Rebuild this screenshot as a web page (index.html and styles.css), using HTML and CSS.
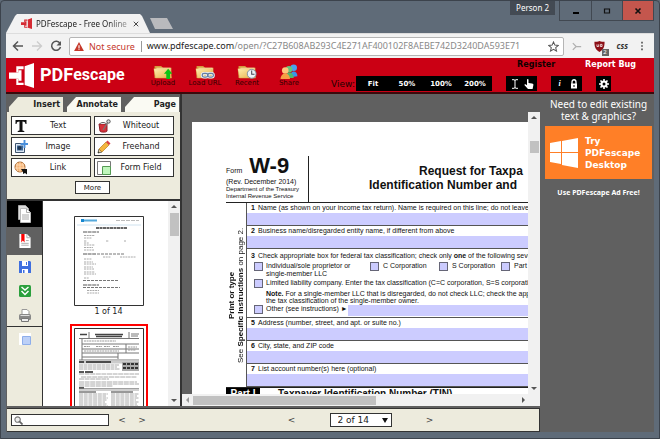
FILE: index.html
```html
<!DOCTYPE html>
<html lang="en">
<head>
<meta charset="utf-8">
<title>PDFescape - Free Online</title>
<link rel="stylesheet" href="styles.css">
</head>
<body>
<svg class="defs" aria-hidden="true">
  <defs>
    <linearGradient id="gold" x1="0" y1="0" x2="1" y2="1"><stop offset="0" stop-color="#fff0b0"/><stop offset="1" stop-color="#e5ab45"/></linearGradient>
    <symbol id="door" viewBox="0 0 24 24"><path d="M7 3h7v3H9v3H7zM7 15h2v4h5v2H7z"/><path d="M15 3l9-3v24l-9-3zM0 9h9V7h3v10H9v-2H0z"/></symbol>
    <symbol id="folder" viewBox="0 0 20 16"><path d="M1 2h7l2 2h9v11H1z" fill="#d39b3d"/><path d="M3 4h15v11H2z" fill="#fff3c4"/><path d="M0 5h17l2 10H2z" fill="url(#gold)" stroke="#dba544" stroke-width=".5"/></symbol>
  </defs>
</svg>
<div class="window">
  <div class="titlebar">
    <div class="tab">
      <svg class="favicon" fill="#d52b33"><use href="#door"/></svg>
      <span class="tab-title">PDFescape - Free Online</span>
      <button class="tab-close" aria-label="Close tab"><svg viewBox="0 0 8 8" width="6" height="6"><path d="M1 1l6 6M7 1L1 7" stroke="#444" stroke-width="1.3"/></svg></button>
    </div>
    <button class="newtab" aria-label="New tab"></button>
    <span class="person">Person 2</span>
    <div class="winbtns">
      <button aria-label="Minimize"><svg viewBox="0 0 8 8" width="8" height="8"><path d="M1 5h6v2H1z"/></svg></button>
      <button aria-label="Maximize"><svg viewBox="0 0 8 8" width="8" height="8"><path d="M1.5 2h5v4h-5z" fill="none" stroke="#111" stroke-width="1.2"/></svg></button>
      <button class="close" aria-label="Close"><svg viewBox="0 0 8 8" width="8" height="8"><path d="M1.5 1.500l5 5M6.500 1.500l-5 5" stroke="#111" stroke-width="1.600"/></svg></button>
    </div>
  </div>

  <div class="addressbar">
    <button aria-label="Back"><svg viewBox="0 0 12 12" width="12" height="12"><path d="M11 6H2M6 1.500L1.500 6 6 10.500" fill="none" stroke="#555" stroke-width="1.500"/></svg></button>
    <button aria-label="Forward"><svg viewBox="0 0 12 12" width="12" height="12"><path d="M1 6h9M6 1.500L10.500 6 6 10.500" fill="none" stroke="#ccc" stroke-width="1.400"/></svg></button>
    <button aria-label="Reload"><svg viewBox="0 0 12 12" width="12" height="12"><path d="M10 3.500A4.500 4.500 0 1 0 10.500 7" fill="none" stroke="#555" stroke-width="1.500"/><path d="M11 1v4.500H6.500z" fill="#555"/></svg></button>
    <div class="omnibox">
      <svg viewBox="0 0 12 11" width="10" height="9"><path d="M6 0l6 11H0z" fill="#c5392b"/><path d="M5.300 4h1.400v3.500H5.300zM5.300 8.300h1.400v1.300H5.300z" fill="#fff"/></svg>
      <span class="notsecure">Not secure</span>
      <span class="url">www.pdfescape.com<span>/open/?C27B608AB293C4E271AF400102F8AEBE742D3240DA593E71</span></span>
      <svg viewBox="0 0 12 12" width="11" height="11"><path d="M6 1l1.500 3.500 3.800.3-2.900 2.500.9 3.700L6 9l-3.300 2 .9-3.700L.7 4.800l3.800-.3z" fill="none" stroke="#555" stroke-width="1.100"/></svg>
    </div>
    <div class="extensions">
      <svg viewBox="0 0 12 10" width="10" height="9"><path d="M1 1l4 4-4 4M4 5h7" fill="none" stroke="#b0b0b0" stroke-width="1.500"/></svg>
      <span class="shield"><svg viewBox="0 0 12 13" width="11" height="11"><path d="M6 0c2 1 4 1 6 1 0 6-1 9-6 12C1 10 0 7 0 1c2 0 4 0 6-1z" fill="#8c1017"/><path d="M3 4v2.500h2V4M7 4h2v2.500H7z" fill="none" stroke="#fff" stroke-width=".9"/></svg><i>2</i></span>
      <b>css</b>
      <svg viewBox="0 0 4 12" width="4" height="10"><path d="M1 1h2v2H1zM1 5h2v2H1zM1 9h2v2H1z" fill="#555"/></svg>
    </div>
  </div>

  <header class="app-header">
    <a class="logo" href="#"><svg fill="#fff"><use href="#door"/></svg><span class="pdf">PDF</span><span>escape</span></a>
    <nav class="tools">
      <button><svg viewBox="0 0 20 16"><use href="#folder"/><path d="M15.500 5l4.500 5.500h-2.500V16h-4v-5.500H11z" fill="#0ac414"/></svg>Upload</button>
      <button><svg viewBox="0 0 20 16"><use href="#folder"/><g fill="none" stroke="#e5edf8" stroke-width="3"><rect x="7" y="10" width="6" height="4" rx="2"/><rect x="13" y="10" width="6" height="4" rx="2"/></g><g fill="none" stroke="#67809f" stroke-width="1.300"><rect x="7" y="10" width="6" height="4" rx="2"/><rect x="13" y="10" width="6" height="4" rx="2"/></g></svg>Load URL</button>
      <button><svg viewBox="0 0 20 16"><use href="#folder"/><circle cx="15" cy="10.500" r="4.700" fill="#eef3f8" stroke="#7c8fa3"/><path d="M15 7v4h3" fill="none" stroke="#445" stroke-width="1.100"/></svg>Recent</button>
      <button><svg viewBox="0 0 20 16"><circle cx="15" cy="4" r="3.500" fill="#49a2ef"/><path d="M11 14c0-8 8-8 8-1z" fill="#3b95e9"/><circle cx="10" cy="5.500" r="3.500" fill="#64c47b"/><path d="M6 15c0-8 9-8 9 0z" fill="#51b96b"/><circle cx="6" cy="7" r="3.500" fill="#ffc67b"/><path d="M1 16c0-8 10-8 10 0z" fill="#f6a044"/></svg>Share</button>
    </nav>
    <div class="controls">
      <div class="links"><a href="#">Register</a><a class="bug" href="#">Report Bug</a></div>
      <div class="bars">
        <span class="view">View:</span>
        <div class="bar zoom"><button>Fit</button><button>50%</button><button>100%</button><button>200%</button></div>
        <div class="bar">
          <button aria-label="Select text"><svg viewBox="0 0 8 10" width="8" height="10"><path d="M1 .7h2l1 .6 1-.6h2M4 1v8M1 9.300h2l1-.6 1 .6h2" fill="none" stroke="#fff"/></svg></button>
          <button aria-label="Pan"><svg viewBox="0 0 10 10" width="10" height="10"><path d="M3 .8c0-1 1.500-1 1.500 0V4L8 4.500c1.500.2 1.500.8 1.300 2L8.600 10H4L.6 6.300c-.6-.8.2-1.500 1-1L3 6.300z" fill="#fff"/></svg></button>
        </div>
        <div class="bar">
          <button class="info">i</button>
          <button aria-label="Protect"><svg viewBox="0 0 8 10" width="8" height="10"><path d="M2 5V3c0-3 4-3 4 0v2" fill="none" stroke="#fff" stroke-width="1.300"/><path d="M1 4.500h6V9.500H1z" fill="#fff"/><path d="M3.500 6h1v2h-1z"/></svg></button>
        </div>
        <div class="bar gear">
          <button aria-label="Settings"><svg viewBox="0 0 12 12" width="10" height="10"><circle cx="6" cy="6" r="3" fill="none" stroke="#fff" stroke-width="2.400"/><path d="M6 0v3M6 9v3M0 6h3M9 6h3M1.800 1.800l2 2M8.200 8.200l2 2M10.200 1.800l-2 2M3.800 8.200l-2 2" stroke="#fff" stroke-width="1.900"/></svg></button>
        </div>
      </div>
    </div>
  </header>

  <main class="workspace">
    <div class="editor">
      <aside class="side">
        <div class="tabs"><button class="on">Insert</button><button>Annotate</button><button>Page</button></div>
        <div class="insert">
          <div class="insert-grid">
            <button><svg viewBox="0 0 14 14"><path d="M1.500 1h11v4h-1c-.3-2-1-2.600-3-2.600V11.500l1.800.5v1H3.700v-1l1.800-.5V2.400c-2 0-2.700.6-3 2.600h-1z" fill="#111"/></svg><span>Text</span></button>
            <button><svg viewBox="0 0 14 14"><path d="M2 5h8v7c0 1.500-7 1.500-7 0z" fill="#d7313a" stroke="#8d2028"/><path d="M3 5c0-2 6-2 6 0" fill="#eee" stroke="#666"/><path d="M6 11l5-8" stroke="#777" stroke-width="1.300"/><circle cx="11.500" cy="2.500" r="1.700" fill="#ddd" stroke="#555"/></svg><span>Whiteout</span></button>
            <button><svg viewBox="0 0 14 14"><path d="M1.500 3.500h9v9h-9z" fill="#dce7f3" stroke="#3d536c"/><path d="M3 5.500h6v5H3z" fill="#416b9a"/><circle cx="5.500" cy="8" r="2" fill="#1e3550"/><path d="M10.500 0v8M6.500 4h8" stroke="#4a8fdb" stroke-width="1.900"/></svg><span>Image</span></button>
            <button><svg viewBox="0 0 14 14"><path d="M1 13l1-4 3 3z" fill="#e9cfa0" stroke="#665"/><path d="M2 9l7-7 3 3-7 7z" fill="#f4b63f" stroke="#b97f20" stroke-width=".7"/><path d="M9 2l1.500-1.500 3 3L12 5z" fill="#dc3f45"/><path d="M1 13l.4-1.500 1 1z" fill="#222"/></svg><span>Freehand</span></button>
            <button><svg viewBox="0 0 14 14"><circle cx="6" cy="6" r="5" fill="#f7b273" stroke="#ad6b32"/><path d="M2 4h8M1 7h10M6 1v10M3.500 2c-1 3-1 5 0 8M8.500 2c1 3 1 5 0 8" stroke="#ffdfbd" stroke-width=".8" fill="none"/><path d="M7 8h6v5.500l-2-1.500-2 1 0-2z" fill="#111"/></svg><span>Link</span></button>
            <button><svg viewBox="0 0 14 14"><path d="M.5.5h13v13H.5z" fill="#fff" stroke="#777"/><path d="M5.500 5.500h8v8h-8z" fill="#bff6bb" stroke="#559a54"/></svg><span>Form Field</span></button>
          </div>
          <button class="more">More</button>
        </div>
        <div class="browse">
          <div class="rail">
            <button class="pages" aria-label="Pages"><svg viewBox="0 0 13 18" width="13" height="18"><path d="M.5.500h7l3 3v11H.5z" fill="#ddd" stroke="#aaa"/><path d="M2.500 3.500h6l4 4v10h-10z" fill="#fff" stroke="#bbb"/><path d="M8.500 3.500v4h4M4 10h7M4 12h7M4 14h7" fill="none" stroke="#aaa"/></svg></button>
            <button class="marks" aria-label="Bookmarks"><svg viewBox="0 0 12 15" width="12" height="14"><path d="M0 0h8l4 4v11H0z" fill="#fff"/><path d="M8 0v4h4M2 10h8M2 12h8M7 7h3" fill="none" stroke="#aaa"/><path d="M2 0h3.500v9L3.700 7 2 9z" fill="#f00"/></svg></button>
            <div class="actions">
              <button aria-label="Save"><svg viewBox="0 0 12 12" width="12" height="12"><path d="M0 0h11l1 1v11H0z" fill="#3f6fdf"/><path d="M3 0h6v5H3zM3 8h6v4H3z" fill="#fff"/><path d="M7 1h1v3H7zM4 9h1.500v3H4z" fill="#3f6fdf"/></svg></button>
              <button aria-label="Download"><svg viewBox="0 0 12 12" width="12" height="12"><rect width="12" height="12" rx="1.500" fill="#2ba03d"/><path d="M2.500 2L6 5l3.500-3M2.500 6L6 9.500 9.500 6" fill="none" stroke="#fff" stroke-width="1.500"/></svg></button>
              <button aria-label="Print"><svg viewBox="0 0 12 13" width="12" height="13"><path d="M3 .500h5l2 2v4H3z" fill="#fff" stroke="#999"/><rect y="5" width="12" height="6" rx="1.500" fill="#888"/><path d="M1.500 6.500h9" stroke="#ddd"/><path d="M2.500 9.500h7v3h-7z" fill="#eee" stroke="#777"/></svg></button>
            </div>
            <div class="shade"><button aria-label="Highlight fields"><svg viewBox="0 0 12 12" width="12" height="12"><path d="M0 0h12v12H0z" fill="#fff"/><path d="M3.500 3.500h8v8h-8z" fill="#bcd0f7" stroke="#8eaeea"/></svg></button></div>
          </div>
          <div class="thumbs">
            <figure>
              <svg viewBox="0 0 70 90" width="70" height="90">
                <path d="M.5.500h69v89H.5z" fill="#fff" stroke="#333"/>
                <path d="M7 3h3v3H7z" fill="#1787cf"/><path d="M10 4.500h13" stroke="#55a9dc" stroke-width="2"/><path d="M42 4.500h23" stroke="#bbb" stroke-dasharray="4 1"/><path d="M3 9h64" stroke="#cfe2ef"/>
                <path d="M22 12h31" stroke="#333" stroke-width="1.500" stroke-dasharray="3 .5"/>
                <path d="M9 16h16M9 38h13M9 69h16" stroke="#555" stroke-dasharray="4 .6"/>
                <path d="M23 38h28M9 64.500h36M9 71.500h37" stroke="#777" stroke-dasharray="3 1"/>
                <path d="M10 19.500h11M10 22h8M10 25h3M32 25h3M50 25h2M10 27h5M10 29h11M10 31.500h9M10 34h10M29 41h8M46 41h16M10 43h8M10 46h9M10 48h12M10 51h9M10 53h10M10 56h11M10 58h12M10 62h5M13 74.500h12M13 77h12" stroke="#aaa" stroke-dasharray="2 .7"/>
              </svg>
              <figcaption>1 of 14</figcaption>
            </figure>
            <figure class="current">
              <svg viewBox="0 0 70 90" width="70" height="90">
                <path d="M.5.500h69v89H.5z" fill="#fff" stroke="#333"/>
                <path d="M6 6.500h7M21 6.500h28M22 8.500h26" stroke="#444" stroke-width="1.500"/><path d="M15 4v6M55 4v6M57 6h8M57 8h7M5 10.500h60M8 10v22M8 16h57M8 21h57M44 25v6M8 25h57M8 29h36M5 32h60M52 16v9" fill="none" stroke="#777"/>
                <path d="M10 13h32M10 18.500h6M22 18.500h6M30 18.500h6M39 18.500h6M10 23h35M54 19h9M54 22h8" stroke="#999" stroke-dasharray="2 .6"/>
                <path d="M5 32.500h60v3H5z" fill="#ccc"/><path d="M5 34h5M12 34h25M5 44h5M11 44h8M5 60h5" stroke="#222" stroke-width="1.600"/>
                <path d="M5 37h40M5 39h38M5 41h41" stroke="#aaa" stroke-dasharray="4 .5"/>
                <path d="M48 34h17v9H48z" fill="#aaa"/><path d="M49 36h16M49 40h16" stroke="#333" stroke-width="2" stroke-dasharray="3 1"/>
                <path d="M5 46h60M7 49h56M5 51h30M5 54h58M5 56h60M5 58h34" stroke="#aaa" stroke-dasharray="5 .6"/><path d="M5 60.500h60M5 62h60" stroke="#777" stroke-width=".7"/>
                <path d="M5 64h17M37 64h22" stroke="#333"/><path d="M5 66h29M5 68h27M5 70h29M5 72h28M5 74h26M5 76h28M5 78h29M5 80h22M37 66h28M37 68h26M37 70h28M37 72h25M37 74h28M37 76h26M37 78h27" stroke="#aaa" stroke-dasharray="4 .7"/>
              </svg>
            </figure>
          </div>
          <div class="vscroll side-scroll"><i class="up"></i><i class="thumb"></i><i class="down"></i></div>
        </div>
      </aside>

      <section class="viewer">
        <div class="canvas">
          <article class="page">
            <div class="form-head">
              <div class="form-id">
                <p class="form-name">Form <strong>W-9</strong></p>
                <p>(Rev. December 2014)</p>
                <p class="dept">Department of the Treasury</p>
                <p class="dept">Internal Revenue Service</p>
              </div>
              <h1><span>Request for Taxpa</span>Identification Number and</h1>
            </div>
            <div class="form-body">
              <div class="vertical"><b>Print or type</b><span>See <b>Specific Instructions</b> on page 2.</span></div>
              <div class="lines">
                <div class="line"><label for="f1"><b>1</b>Name (as shown on your income tax return). Name is required on this line; do not leave thi</label><input id="f1"></div>
                <div class="line"><label for="f2"><b>2</b>Business name/disregarded entity name, if different from above</label><input id="f2"></div>
                <div class="classes">
                  <p class="ask"><b>3</b>Check appropriate box for federal tax classification; check only <strong>one</strong> of the following seven</p>
                  <div class="row">
                    <label class="indiv"><input type="checkbox"><span>Individual/sole proprietor or<br>single-member LLC</span></label>
                    <label class="corp"><input type="checkbox"><span>C Corporation</span></label>
                    <label class="scorp"><input type="checkbox"><span>S Corporation</span></label>
                    <label><input type="checkbox"><span>Part</span></label>
                  </div>
                  <label class="llc"><input type="checkbox"><span>Limited liability company. Enter the tax classification (C=C corporation, S=S corporation</span></label>
                  <p class="note"><strong>Note.</strong> For a single-member LLC that is disregarded, do not check LLC; check the appro<br>the tax classification of the single-member owner.</p>
                  <div class="other"><label><input type="checkbox"><span>Other (see instructions) ►</span></label><input aria-label="Other classification"></div>
                </div>
                <div class="line"><label for="f5"><b>5</b>Address (number, street, and apt. or suite no.)</label><input id="f5"></div>
                <div class="line"><label for="f6"><b>6</b>City, state, and ZIP code</label><input id="f6"></div>
                <div class="line"><label for="f7"><b>7</b>List account number(s) here (optional)</label><input id="f7"></div>
              </div>
            </div>
            <h2><span>Part I</span>Taxpayer Identification Number (TIN)</h2>
          </article>
          <div class="vscroll page-scroll"><i class="up"></i><i class="thumb"></i><i class="down"></i></div>
        </div>
        <div class="hscroll"><i class="left"></i><i class="thumb"></i><i class="right"></i></div>
      </section>

      <footer class="pager">
        <div class="find">
          <label class="search"><svg viewBox="0 0 10 10" width="9" height="9"><circle cx="4" cy="4" r="3" fill="#eee" stroke="#777" stroke-width="1.200"/><path d="M6 6l3.500 3.500" stroke="#666" stroke-width="1.800"/></svg><input aria-label="Find in document"></label>
          <button>&lt;</button><button>&gt;</button>
        </div>
        <div class="goto">
          <button>&lt;</button>
          <div class="pick"><select aria-label="Page"><option>2 of 14</option></select></div>
          <button>&gt;</button>
        </div>
      </footer>
    </div>

    <aside class="promo">
      <p>Need to edit existing text &amp; graphics?</p>
      <a class="try" href="#"><svg viewBox="0 0 28 30" width="28" height="30"><path d="M0 5l11-2v11H0zM12 3l16-3v14H12zM0 15h11v11L0 24zM12 15h16v15l-16-3z" fill="#fff"/></svg><span>Try PDFescape Desktop</span></a>
      <small>Use PDFescape Ad Free!</small>
    </aside>
  </main>
</div>
</body>
</html>
```

FILE: styles.css
```css
* { box-sizing: border-box; }
body { margin: 0; font: 9px/12px "DejaVu Sans", Verdana, sans-serif; color: #222; background: #5f6b78; }
button, input, select { margin: 0; padding: 0; border: 0; background: none; font: inherit; color: inherit; border-radius: 0; }
button { display: flex; align-items: center; justify-content: center; }
a { text-decoration: none; color: inherit; }
p, h1, h2, figure { margin: 0; }
svg { flex: none; display: block; }
.defs { position: absolute; width: 0; height: 0; }

.window { display: flex; flex-direction: column; height: 100vh; min-height: 400px; overflow: hidden; padding: 0 5px 6px; border: 1px solid #3c434c; border-radius: 4px 4px 0 0; }

/* Browser chrome */
.titlebar { display: flex; align-items: flex-end; height: 32px; flex: none; font: 8px/12px "Noto Sans", sans-serif; }
.tab { display: flex; align-items: center; gap: 4px; width: 144px; height: 19px; padding: 0 11px 0 15px; background: #f2f2f2; clip-path: polygon(0 100%, 9px 2px, 11px 0, 134px 0, 136px 2px, 100% 100%); }
.favicon { width: 11px; height: 11px; }
.tab-title { flex: 1; white-space: nowrap; overflow: hidden; -webkit-mask-image: linear-gradient(90deg, #000 75%, #0005); mask-image: linear-gradient(90deg, #000 75%, #0005); }
.newtab { width: 23px; height: 11px; margin-bottom: 4px; background: #b9babd; clip-path: polygon(0 0, 17px 0, 100% 100%, 5px 100%); }
.person { align-self: flex-start; margin-left: auto; padding: 0 6px; line-height: 14px; background: #434a53; color: #fff; }
.winbtns { align-self: flex-start; display: flex; margin-left: 4px; border: 1px solid #414851; border-top: 0; }
.winbtns button { width: 31px; height: 19px; }
.winbtns button + button { border-left: 1px solid #414851; }
.winbtns .close { background: #c4564d; }
.addressbar { display: flex; align-items: center; gap: 7px; height: 25px; flex: none; padding: 0 10px 0 6px; background: #f2f2f2; border-top: 1px solid #ddd; }
.omnibox { flex: 1; min-width: 0; display: flex; align-items: center; gap: 5px; height: 19px; padding: 0 4px; background: #fff; border: 1px solid #b5b5b5; border-radius: 2px; font: 9px/14px "Noto Sans", sans-serif; white-space: nowrap; }
.notsecure { color: #c5392b; padding-right: 6px; border-right: 1px solid #999; line-height: 11px; }
.url { flex: 1; }
.url span { color: #888; }
.extensions { display: flex; align-items: center; gap: 12px; margin-left: 1px; }
.extensions b { font: italic bold 8px/10px "Noto Sans", sans-serif; color: #333; }
.shield { position: relative; }
.shield i { position: absolute; right: -4px; bottom: -4px; width: 7px; background: #666; color: #fff; font: 6px/7px "Noto Sans", sans-serif; text-align: center; }

/* Application header */
.app-header { display: flex; height: 36px; flex: none; background: #cb0014; border-bottom: 2px solid #3a0a0c; }
.logo { display: flex; align-items: center; width: 136px; padding-left: 3px; color: #fff; font: bold 16px/30px Roboto, sans-serif; }
.logo svg { width: 25px; height: 25px; margin-right: 6px; }
.logo .pdf { font-size: 18px; }
.tools { display: flex; }
.tools button { flex-direction: column; justify-content: flex-start; width: 42px; padding-top: 6px; font-size: 7px; line-height: 9px; color: #300; white-space: nowrap; }
.tools svg { width: 20px; height: 15px; }
.controls { flex: 1; display: flex; flex-direction: column; justify-content: space-between; }
.links { display: flex; justify-content: flex-end; gap: 30px; padding-right: 18px; font: bold 8px/14px "DejaVu Sans", Verdana, sans-serif; color: #100; }
.links .bug { color: #fff; }
.bars { display: flex; justify-content: flex-end; gap: 14px; padding-right: 43px; }
.view { margin-right: -13px; line-height: 16px; color: #200; }
.bar { display: flex; height: 15px; padding: 0 2px; background: #000; }
.bar button { width: 13px; color: #fff; font: bold 7px/14px "DejaVu Sans", Verdana, sans-serif; }
.bar .info { font: italic bold 8px/12px "Liberation Serif", serif; }
.bar button + button { margin-left: 1px; }
.zoom { padding: 0; }
.zoom button, .zoom button + button { width: 34px; margin: 0; }
.gear { padding: 0 1px; }

/* Workspace */
.workspace { flex: 1; min-height: 0; display: grid; grid-template-columns: minmax(0, 1fr) 114px; background: #606060; }
.editor { display: grid; grid-template: minmax(0, 1fr) 24px / 175px minmax(0, 1fr); row-gap: 2px; min-height: 0; padding-left: 1px; }
.side { display: flex; flex-direction: column; min-height: 0; padding-top: 3px; border-right: 2px solid #333; }
.tabs { display: flex; gap: 4px; padding-left: 2px; font-weight: bold; }
.tabs button { flex: none; width: 54px; height: 15px; justify-content: flex-end; padding-right: 3px; background: #fafaf3; font: bold 8px/14px "DejaVu Sans", Verdana, sans-serif; clip-path: polygon(0 100%, 0 10px, 9px 0, 100% 0, 100% 100%); }
.tabs .on { background: #edebdd; }
.insert { padding: 4px 6px 5px 4px; background: #edebdd; border-bottom: 2px solid #333; }
.insert-grid { display: grid; grid-template-columns: 1fr 1fr; gap: 2px 3px; }
.insert button { background: #fff; border: 1px solid #333; }
.insert-grid button { height: 19px; padding: 0 2px; font-size: 8px; }
.insert-grid svg { width: 14px; height: 14px; }
.insert-grid span { flex: 1; white-space: nowrap; }
.insert .more { width: 35px; height: 13px; margin: 4px auto 0; font-size: 7px; }
.browse { flex: 1; min-height: 0; display: flex; background: #fff; }
.rail { width: 36px; display: flex; flex-direction: column; background: #606060; border-right: 1px solid #333; }
.rail button { width: 100%; }
.pages { height: 26px; background: #000; }
.marks { height: 28px; }
.actions { display: flex; flex-direction: column; gap: 12px; padding: 6px 0 4px; background: #edebdd; border-bottom: 1px solid #333; }
.shade { flex: 1; padding-top: 6px; background: #edebdd; }
.thumbs { flex: 1; display: flex; flex-direction: column; align-items: center; gap: 6px; padding: 15px 0 0 6px; overflow: hidden; }
.thumbs figcaption { text-align: center; font-size: 8px; }
.current { border: 2px solid #f00; padding: 2px; }

.vscroll { display: flex; flex-direction: column; align-items: center; flex: none; width: 12px; padding: 4px 0; background: #f1f1f1; }
.hscroll { display: flex; align-items: center; height: 12px; padding: 0 15px 0 4px; background: #f1f1f1; }
.thumb { background: #c1c1c1; }
.up, .down, .left, .right { border: 3px solid transparent; }
.up { border-top: 0; border-bottom-color: #555; }
.down { border-bottom: 0; border-top-color: #555; margin-top: auto; }
.left { border-left: 0; border-right-color: #999; }
.right { border-right: 0; border-left-color: #555; margin-left: auto; }
.side-scroll .thumb { width: 9px; height: 23px; margin-top: 5px; }
.page-scroll .thumb { width: 9px; height: 12px; margin-top: 22px; }
.hscroll .thumb { width: 54%; height: 9px; margin-left: 4px; }

.viewer { display: flex; flex-direction: column; min-width: 0; min-height: 0; padding-top: 18px; }
.canvas { flex: 1; min-height: 0; display: flex; padding-left: 10px; }

/* Document page */
.page { flex: 1; min-width: 0; margin-top: 10px; padding: 34px 0 0 34px; overflow: hidden; background: #fff; color: #111; font: 7px/8px "Liberation Sans", Arial, sans-serif; white-space: nowrap; }
.form-head { display: flex; height: 47px; border-bottom: 1px solid #222; }
.form-id { width: 83px; border-right: 1px solid #222; }
.form-name { height: 22px; line-height: 20px; }
.form-name strong { margin-left: 5px; font-size: 22px; font-weight: 900; }
.form-id .dept { font-size: 6px; line-height: 7px; }
.form-head h1 { flex: 1; padding: 8px 0 0 60px; font: bold 12px/14px "Liberation Sans", Arial, sans-serif; }
.form-head h1 span { display: block; padding-left: 50px; }
.form-body { display: flex; }
.vertical { display: flex; flex-direction: column; justify-content: center; align-items: center; width: 20px; transform: rotate(180deg); writing-mode: vertical-rl; font-size: 8px; line-height: 9px; }
.lines { flex: 1; min-width: 0; border-left: 1px solid #555; }
.line { display: flex; flex-direction: column; height: 23px; border-bottom: 1px solid #555; }
.line label { height: 10px; padding-left: 4px; line-height: 9px; }
.line b, .ask b { display: inline-block; width: 7px; }
.line input { flex: 1; width: 100%; min-height: 0; background: #ccccff; }
.classes { height: 69px; padding: 3px 0 0 7px; border-bottom: 1px solid #555; }
.ask { margin-left: -3px; height: 10px; }
.classes label { display: flex; gap: 3px; }
.classes input[type=checkbox] { appearance: none; flex: none; width: 9px; height: 9px; border: 1px solid #667; background: #ccccff; }
.row { display: flex; height: 17px; }
.row label:nth-child(n+2) { gap: 4px; }
.indiv { width: 116px; }
.corp { width: 69px; }
.scorp { width: 62px; }
.note { padding-left: 12px; margin-top: 2px; line-height: 7px; }
.other { display: flex; justify-content: space-between; height: 11px; margin-top: 1px; }
.other > input { width: 66%; background: #ccccff; }
.page h2 { display: flex; gap: 18px; font: bold 10px/11px "Liberation Sans", Arial, sans-serif; border-top: 1px solid #222; }
.page h2 span { width: 34px; background: #000; color: #fff; text-align: center; }

.pager { grid-column: 1 / -1; display: grid; grid-template-columns: 175px 1fr; align-items: center; background: #edebdd; border: solid #333; border-width: 1px 1px 1px 0; color: #444; }
.find { display: flex; gap: 6px; padding-left: 4px; }
.find button, .goto button { width: 14px; }
.search { display: flex; align-items: center; width: 98px; height: 12px; padding-left: 2px; background: #fff; border: 1px solid #333; }
.search input { flex: 1; min-width: 0; height: 10px; }
.goto { display: flex; justify-content: center; align-items: center; gap: 31px; }
.pick { position: relative; }
.pick::after { content: ""; position: absolute; right: 4px; top: 5px; border: 3px solid transparent; border-top: 5px solid #111; border-bottom: 0; pointer-events: none; }
.goto select { display: block; appearance: none; width: 62px; height: 14px; padding: 0 7px; background: #fff; border: 1px solid #333; font-size: 9px; color: #222; }

.promo { padding: 4px 2px 0 5px; text-align: center; color: #fff; font: 10px/12px "Noto Sans", sans-serif; }
.try { display: flex; align-items: center; gap: 7px; height: 53px; margin: 4px 0 6px; padding-left: 5px; background: #ff7f27; text-align: left; font: bold 9px/12px "DejaVu Sans", Verdana, sans-serif; }
.promo small { font: bold 7px/10px "Noto Sans", sans-serif; }
```
